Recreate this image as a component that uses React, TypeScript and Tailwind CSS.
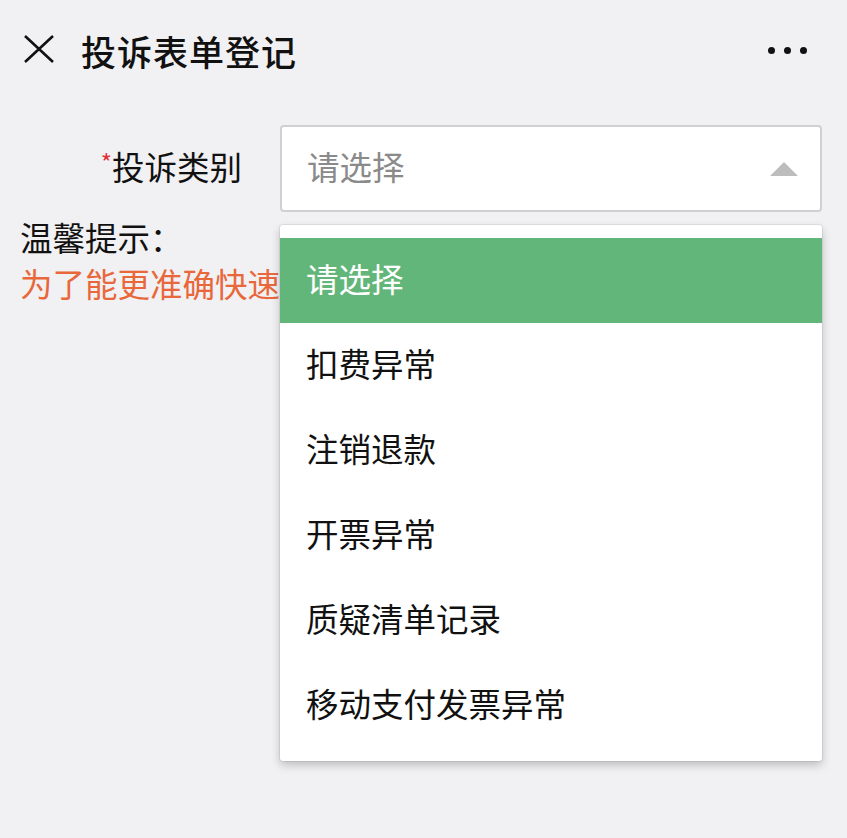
import React from "react";

const options = ["请选择", "扣费异常", "注销退款", "开票异常", "质疑清单记录", "移动支付发票异常"];

export default function App() {
    return (
        <div className="w-[847px] h-[838px] bg-[#f1f0f2] overflow-hidden text-[#111] font-['Noto_Sans_CJK_SC','Noto_Sans',sans-serif]">
            {/* header */}
            <div className="h-[100px] flex items-center pl-[22px] pr-[40px]">
                <svg width="34" height="30" viewBox="0 0 34 30" className="mr-[25px] mt-[-2px]">
                    <path d="M3 2 L31 28 M31 2 L3 28" stroke="#111" strokeWidth="2.6" fill="none" />
                </svg>
                <h1 className="text-[35px] font-medium leading-none tracking-[1px]">投诉表单登记</h1>
                <div className="ml-auto flex gap-[9px] items-center">
                    <span className="w-[7px] h-[7px] rounded-full bg-[#111]"></span>
                    <span className="w-[7px] h-[7px] rounded-full bg-[#111]"></span>
                    <span className="w-[7px] h-[7px] rounded-full bg-[#111]"></span>
                </div>
            </div>

            {/* form */}
            <div className="relative mt-[25px]">
                <div className="flex items-center">
                    <label className="w-[244px] text-right pr-[2px] text-[32.5px] leading-none mt-[-5px]">
                        <span className="text-[#e0303a] text-[24px] align-top">*</span>投诉类别
                    </label>
                    <div className="ml-[36px] w-[542px] h-[87px] bg-white border-2 border-[#d0cfd2] rounded-[4px] flex items-center pl-[25px] pr-[22px]">
                        <span className="text-[32.5px] text-[#8a8a8a] mt-[-4px]">请选择</span>
                        <span className="ml-auto w-0 h-0 border-l-[14px] border-r-[14px] border-b-[14px] border-l-transparent border-r-transparent border-b-[#bdbdbd]"></span>
                    </div>
                </div>

                <div className="pl-[20px] mt-[2px]">
                    <p className="text-[32.5px] leading-[46px]">温馨提示：</p>
                    <div className="w-[260px] overflow-hidden">
                        <p className="text-[32.5px] leading-[46px] text-[#e8683c] whitespace-nowrap">为了能更准确快速</p>
                    </div>
                </div>

                {/* dropdown */}
                <div className="absolute left-[280px] top-[100px] w-[542px] bg-white rounded-[3px] py-[13px] shadow-[0_4px_10px_rgba(0,0,0,0.22),0_0_0_1px_rgba(0,0,0,0.06)]">
                    {options.map((opt, i) => (
                        <div
                            key={opt}
                            className={"h-[85px] flex items-center pl-[26px] text-[32.5px] " + (i === 0 ? "bg-[#62b67a] text-white" : "text-[#111]")}
                        >
                            <span className="mt-[-4px]">{opt}</span>
                        </div>
                    ))}
                </div>
            </div>
        </div>
    );
}
